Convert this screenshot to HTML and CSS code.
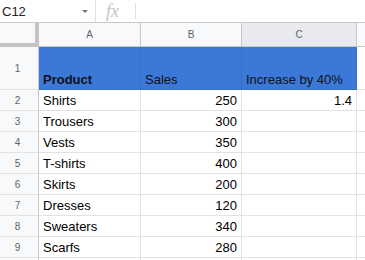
FILE: index.html
```html
<!DOCTYPE html>
<html lang="en">

<head>
    <meta charset="UTF-8">
    <meta name="viewport" content="width=device-width, initial-scale=1.0">
    <title>Sales</title>
    <link rel="stylesheet" href="styles.css">
</head>

<body>
    <div class="formula-bar">
        <div class="name-box">
            <span class="cell-ref">C12</span>
            <span class="arrow"></span>
        </div>
        <div class="fx">fx</div>
        <div class="formula-input"></div>
    </div>

    <div class="sheet">
        <div class="corner"></div>
        <div class="col-head">A</div>
        <div class="col-head">B</div>
        <div class="col-head selected">C</div>
        <div class="col-head last"></div>

        <div class="row-head">1</div>
        <div class="cell head bold">Product</div>
        <div class="cell head">Sales</div>
        <div class="cell head">Increase by 40%</div>
        <div class="cell last tall"></div>

        <div class="row-head">2</div>
        <div class="cell">Shirts</div>
        <div class="cell num">250</div>
        <div class="cell num">1.4</div>
        <div class="cell last"></div>

        <div class="row-head">3</div>
        <div class="cell">Trousers</div>
        <div class="cell num">300</div>
        <div class="cell"></div>
        <div class="cell last"></div>

        <div class="row-head">4</div>
        <div class="cell">Vests</div>
        <div class="cell num">350</div>
        <div class="cell"></div>
        <div class="cell last"></div>

        <div class="row-head">5</div>
        <div class="cell">T-shirts</div>
        <div class="cell num">400</div>
        <div class="cell"></div>
        <div class="cell last"></div>

        <div class="row-head">6</div>
        <div class="cell">Skirts</div>
        <div class="cell num">200</div>
        <div class="cell"></div>
        <div class="cell last"></div>

        <div class="row-head">7</div>
        <div class="cell">Dresses</div>
        <div class="cell num">120</div>
        <div class="cell"></div>
        <div class="cell last"></div>

        <div class="row-head">8</div>
        <div class="cell">Sweaters</div>
        <div class="cell num">340</div>
        <div class="cell"></div>
        <div class="cell last"></div>

        <div class="row-head">9</div>
        <div class="cell">Scarfs</div>
        <div class="cell num">280</div>
        <div class="cell"></div>
        <div class="cell last"></div>

        <div class="row-head"></div>
        <div class="cell"></div>
        <div class="cell"></div>
        <div class="cell"></div>
        <div class="cell last"></div>
    </div>
</body>

</html>
```

FILE: styles.css
```css
body {
    font-family: "Liberation Sans", Arial, sans-serif;
    background-color: #fff;
    margin: 0;
    padding: 0;
    overflow: hidden;
}

.formula-bar {
    display: flex;
    align-items: center;
    height: 23px;
    box-sizing: border-box;
    border-bottom: 1px solid #c7c7c7;
}

.name-box {
    display: flex;
    align-items: center;
    justify-content: space-between;
    width: 96px;
    height: 100%;
    box-sizing: border-box;
    padding: 0 7px 0 2px;
    border-right: 1px solid #e0e0e0;
}

.cell-ref {
    font-size: 13px;
    color: #202124;
}

.arrow {
    width: 0;
    height: 0;
    border-left: 3px solid transparent;
    border-right: 3px solid transparent;
    border-top: 3px solid #777;
    margin-top: 1px;
}

.fx {
    width: 40px;
    height: 16px;
    line-height: 16px;
    box-sizing: border-box;
    padding-left: 10px;
    font-family: "Liberation Serif", serif;
    font-style: italic;
    font-size: 18px;
    color: #c5c5c5;
    border-right: 1px solid #e0e0e0;
}

.formula-input {
    flex: 1;
}

.sheet {
    display: grid;
    grid-template-columns: 39px 102px 101px 115px 1fr;
    grid-template-rows: 24px 43px repeat(9, 21px);
    font-size: 13px;
    color: #000;
}

.corner {
    background-color: #f8f9fa;
    border-right: 4px solid #c4c4c4;
    border-bottom: 4px solid #c4c4c4;
}

.col-head {
    display: flex;
    align-items: center;
    justify-content: center;
    background-color: #f8f9fa;
    color: #5f6368;
    font-size: 10px;
    border-right: 1px solid #c7c7c7;
    border-bottom: 1px solid #c7c7c7;
}

.col-head.selected {
    background-color: #e8eaed;
}

.col-head.last {
    border-right: none;
}

.row-head {
    display: flex;
    align-items: center;
    justify-content: center;
    padding-right: 3px;
    background-color: #f8f9fa;
    color: #5f6368;
    font-size: 10px;
    border-right: 1px solid #c7c7c7;
    border-bottom: 1px solid #e2e2e2;
}

.cell {
    display: flex;
    align-items: flex-end;
    padding: 0 4px 2px 4px;
    border-right: 1px solid #e2e2e2;
    border-bottom: 1px solid #e2e2e2;
    white-space: nowrap;
    overflow: hidden;
}

.cell.head {
    background-color: #3c78d8;
    color: #111;
    border-right-color: #3a6ec4;
    border-bottom-color: #3a6ec4;
}

.cell.bold {
    font-weight: bold;
}

.cell.num {
    justify-content: flex-end;
}

.cell.last {
    border-right: none;
}
```
